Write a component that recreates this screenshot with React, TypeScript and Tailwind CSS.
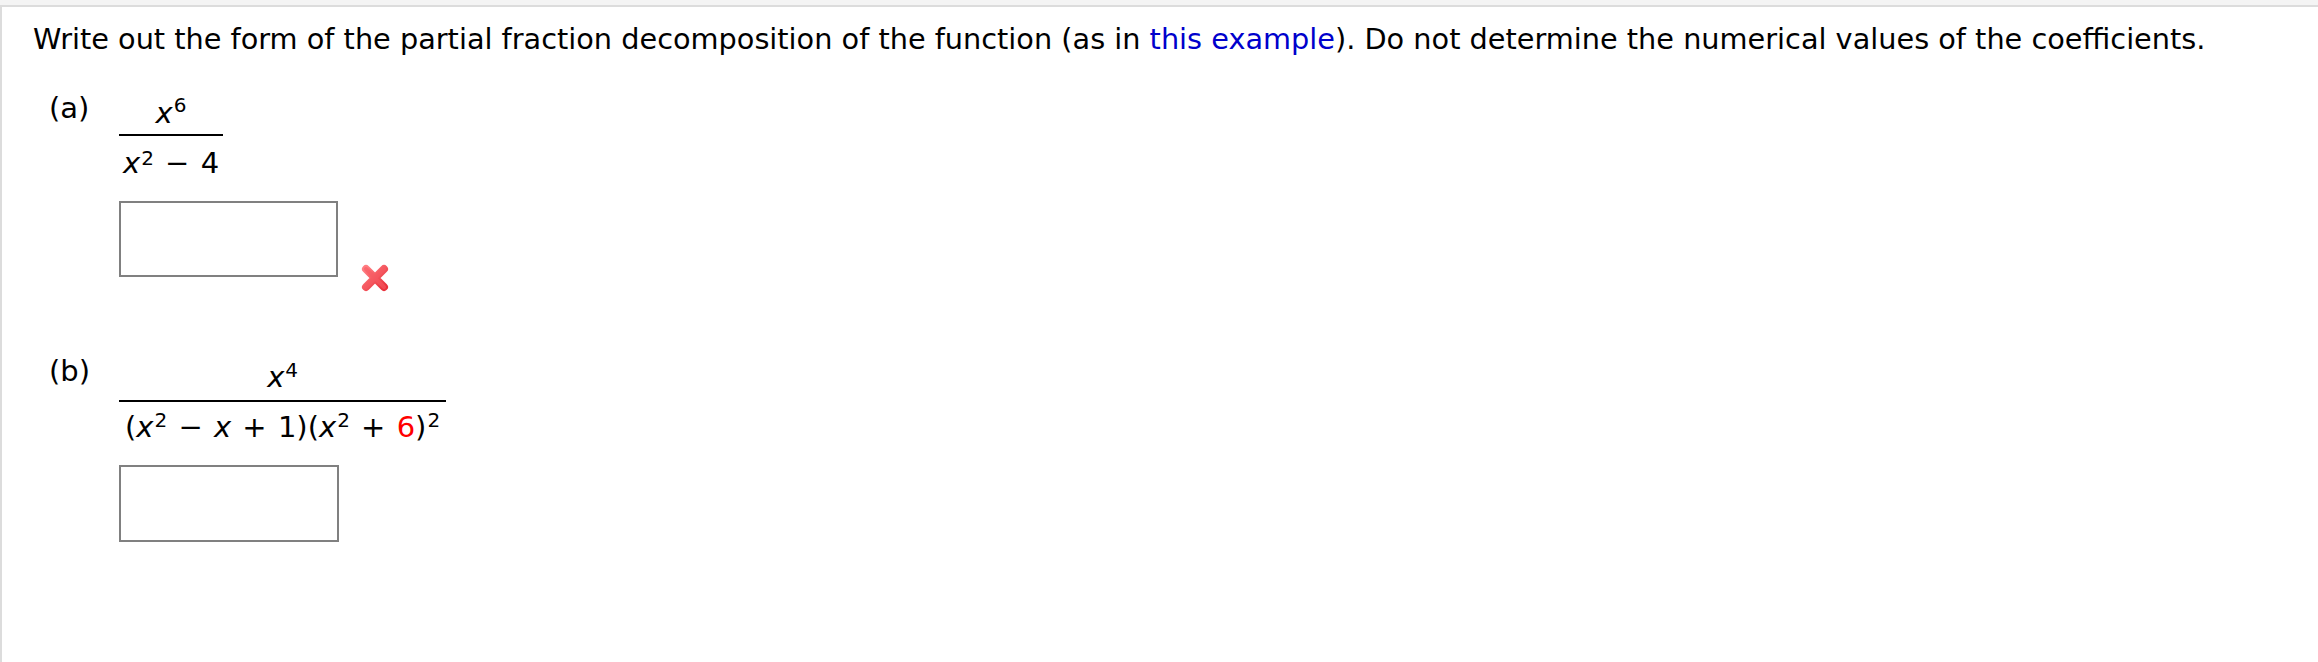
import React from "react";

function Sup({ children, raise }: { children: React.ReactNode; raise: "a" | "b" | "c" }) {
  const cls =
    raise === "a"
      ? "relative top-[-11px] ml-[1px] text-[20px] leading-[0] not-italic"
      : raise === "b"
      ? "relative top-[-8px] ml-[1px] text-[20px] leading-[0] not-italic"
      : "relative top-[-10px] ml-[1px] text-[20px] leading-[0] not-italic";
  return <span className={cls}>{children}</span>;
}

function X() {
  return <span className="italic">x</span>;
}

function WrongMark() {
  return (
    <svg width="28" height="28" viewBox="0 0 28 28" className="block">
      <defs>
        <linearGradient id="wg" x1="0" y1="0" x2="1" y2="1">
          <stop offset="0" stopColor="#ff7b80" />
          <stop offset="1" stopColor="#e8323c" />
        </linearGradient>
      </defs>
      <path d="M5 5 L23 23 M23 5 L5 23" stroke="url(#wg)" strokeWidth="8" strokeLinecap="round" fill="none" />
      <path d="M5 5 L23 23 M23 5 L5 23" stroke="#f65a62" strokeWidth="4" strokeLinecap="round" fill="none" opacity="0.6" />
    </svg>
  );
}

export default function App() {
  return (
    <div className="min-h-[662px] bg-white font-['DejaVu_Sans','Verdana',sans-serif] text-black">
      <div className="h-[5px] bg-[#f4f4f4]" />
      <div className="min-h-[657px] border-t-2 border-l-2 border-[#dcdcdc] pl-[31px] pt-[15px] text-[29px] leading-[34px]">
        <p className="whitespace-nowrap text-[28.75px]">
          Write out the form of the partial fraction decomposition of the function (as in{" "}
          <span className="text-[#0000cc]">this example</span>). Do not determine the numerical values of the coefficients.
        </p>

        {/* Part (a) */}
        <div className="mt-[35px] flex items-start pl-[16px]">
          <div className="w-[70px]">(a)</div>
          <div className="flex flex-col items-start pt-[5px]">
            <div className="inline-flex flex-col items-stretch">
              <div className="pb-[4px] text-center">
                <X />
                <Sup raise="a">6</Sup>
              </div>
              <div className="border-t-2 border-black px-[4px] pt-[10px] text-center whitespace-nowrap [word-spacing:2px]">
                <X />
                <Sup raise="b">2</Sup> − 4
              </div>
            </div>
            <div className="mt-[21px] flex items-end">
              <div className="h-[76px] w-[219px] border-2 border-[#808080] bg-white" />
              <div className="ml-[23px] translate-y-[15px]">
                <WrongMark />
              </div>
            </div>
          </div>
        </div>

        {/* Part (b) */}
        <div className="mt-[77px] flex items-start pl-[16px]">
          <div className="w-[70px]">(b)</div>
          <div className="flex flex-col items-start pt-[6px]">
            <div className="inline-flex flex-col items-stretch">
              <div className="pb-[6px] text-center">
                <X />
                <Sup raise="c">4</Sup>
              </div>
              <div className="border-t-2 border-black px-[6px] pt-[8px] text-center whitespace-nowrap [word-spacing:2px]">
                (<X />
                <Sup raise="c">2</Sup> − <X /> + 1)(<X />
                <Sup raise="c">2</Sup> + <span className="text-[#ff0000]">6</span>)<Sup raise="c">2</Sup>
              </div>
            </div>
            <div className="mt-[21px] h-[77px] w-[220px] border-2 border-[#808080] bg-white" />
          </div>
        </div>
      </div>
    </div>
  );
}
